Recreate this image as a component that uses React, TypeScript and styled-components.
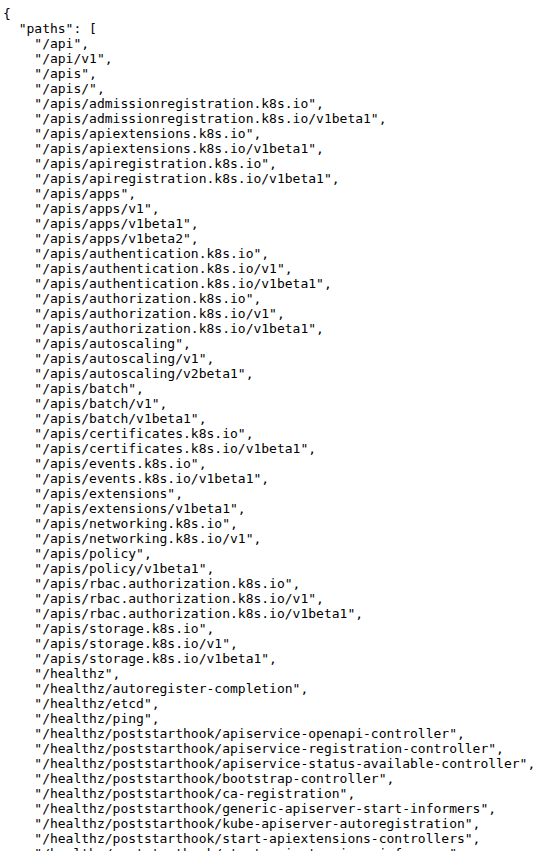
import React from "react";
import styled, { createGlobalStyle } from "styled-components";

const Global = createGlobalStyle`
  html, body { margin: 0; padding: 0; background: #ffffff; }
`;

const Pre = styled.pre`
  margin: 0;
  padding: 6px 3px;
  font-family: "DejaVu Sans Mono", monospace;
  font-size: 13px;
  line-height: 15px;
  color: #000000;
  white-space: pre-wrap;
  word-wrap: break-word;
`;

const paths = [
  "/api",
  "/api/v1",
  "/apis",
  "/apis/",
  "/apis/admissionregistration.k8s.io",
  "/apis/admissionregistration.k8s.io/v1beta1",
  "/apis/apiextensions.k8s.io",
  "/apis/apiextensions.k8s.io/v1beta1",
  "/apis/apiregistration.k8s.io",
  "/apis/apiregistration.k8s.io/v1beta1",
  "/apis/apps",
  "/apis/apps/v1",
  "/apis/apps/v1beta1",
  "/apis/apps/v1beta2",
  "/apis/authentication.k8s.io",
  "/apis/authentication.k8s.io/v1",
  "/apis/authentication.k8s.io/v1beta1",
  "/apis/authorization.k8s.io",
  "/apis/authorization.k8s.io/v1",
  "/apis/authorization.k8s.io/v1beta1",
  "/apis/autoscaling",
  "/apis/autoscaling/v1",
  "/apis/autoscaling/v2beta1",
  "/apis/batch",
  "/apis/batch/v1",
  "/apis/batch/v1beta1",
  "/apis/certificates.k8s.io",
  "/apis/certificates.k8s.io/v1beta1",
  "/apis/events.k8s.io",
  "/apis/events.k8s.io/v1beta1",
  "/apis/extensions",
  "/apis/extensions/v1beta1",
  "/apis/networking.k8s.io",
  "/apis/networking.k8s.io/v1",
  "/apis/policy",
  "/apis/policy/v1beta1",
  "/apis/rbac.authorization.k8s.io",
  "/apis/rbac.authorization.k8s.io/v1",
  "/apis/rbac.authorization.k8s.io/v1beta1",
  "/apis/storage.k8s.io",
  "/apis/storage.k8s.io/v1",
  "/apis/storage.k8s.io/v1beta1",
  "/healthz",
  "/healthz/autoregister-completion",
  "/healthz/etcd",
  "/healthz/ping",
  "/healthz/poststarthook/apiservice-openapi-controller",
  "/healthz/poststarthook/apiservice-registration-controller",
  "/healthz/poststarthook/apiservice-status-available-controller",
  "/healthz/poststarthook/bootstrap-controller",
  "/healthz/poststarthook/ca-registration",
  "/healthz/poststarthook/generic-apiserver-start-informers",
  "/healthz/poststarthook/kube-apiserver-autoregistration",
  "/healthz/poststarthook/start-apiextensions-controllers",
  "/healthz/poststarthook/start-apiextensions-informers",
  "/healthz/poststarthook/start-kube-aggregator-informers",
  "/healthz/poststarthook/start-kube-apiserver-informers",
  "/logs",
  "/metrics",
  "/openapi/v2",
  "/swagger-2.0.0.json",
  "/swagger-2.0.0.pb-v1",
  "/swagger-2.0.0.pb-v1.gz",
  "/swagger.json",
  "/swaggerapi",
  "/version",
];

const text =
  "{\n" +
  '  "paths": [\n' +
  paths.map((p) => `    "${p}"`).join(",\n") +
  "\n  ]\n}";

export default function App() {
  return (
    <>
      <Global />
      <Pre>{text}</Pre>
    </>
  );
}
